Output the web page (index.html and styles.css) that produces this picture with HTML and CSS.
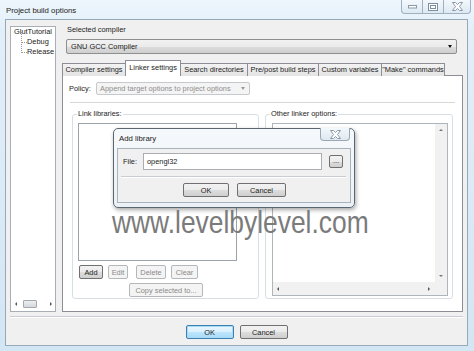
FILE: index.html
```html
<!DOCTYPE html>
<html>
<head>
<meta charset="utf-8">
<link rel="stylesheet" href="styles.css">
</head>
<body>
<div class="window">
  <div class="titlebar">
    <span class="title">Project build options</span>
    <div class="caps">
      <span class="cap cap-min"><svg width="9" height="4" viewBox="0 0 9 4"><rect x="0.5" y="0.5" width="8" height="2.5" fill="#fff" stroke="#8a9aa8"/></svg></span>
      <span class="cap cap-max"><svg width="10" height="8" viewBox="0 0 10 8"><rect x="0.5" y="0.5" width="9" height="7" fill="#fff" stroke="#7d8d9b"/><rect x="2.5" y="2.5" width="5" height="3" fill="none" stroke="#7d8d9b"/></svg></span>
      <span class="cap cap-close"><svg width="11" height="9" viewBox="0 0 11 9"><path d="M0.5 0.5h3l2 2 2-2h3l-3 4 3 4h-3l-2-2-2 2h-3l3-4z" fill="#fff" stroke="#8a98a6"/></svg></span>
    </div>
  </div>
  <div class="client">
    <div class="main">
      <div class="tree">
        <div class="tree-items">
          <div class="node root">GlutTutorial</div>
          <div class="node child first">Debug</div>
          <div class="node child">Release</div>
        </div>
        <div class="tree-scroll">
          <span class="arr arr-l"></span>
          <span class="thumb"></span>
          <span class="arr arr-r"></span>
        </div>
      </div>
      <div class="right">
        <div class="lbl">Selected compiler</div>
        <div class="combo"><span>GNU GCC Compiler</span><span class="dd"></span></div>
        <div class="tabs">
          <span class="tab t1">Compiler settings</span>
          <span class="tab t2 sel">Linker settings</span>
          <span class="tab t3">Search directories</span>
          <span class="tab t4">Pre/post build steps</span>
          <span class="tab t5">Custom variables</span>
          <span class="tab t6">"Make" commands</span>
        </div>
        <div class="panel">
          <div class="policy">
            <span class="policy-lbl">Policy:</span>
            <div class="pcombo"><span>Append target options to project options</span><span class="dd gray"></span></div>
          </div>
          <div class="sep"></div>
          <div class="groups">
            <fieldset class="group g1">
              <legend>Link libraries:</legend>
              <div class="listbox"></div>
              <div class="btnrow">
                <span class="btn b-add">Add</span>
                <span class="btn dis b-edit">Edit</span>
                <span class="btn dis b-del">Delete</span>
                <span class="btn dis b-clear">Clear</span>
              </div>
              <span class="btn dis b-copy">Copy selected to...</span>
            </fieldset>
            <fieldset class="group g2">
              <legend>Other linker options:</legend>
              <div class="textarea">
                <div class="ta-body"></div>
                <div class="vscroll"><span class="arr arr-u"></span><span class="arr arr-d"></span></div>
                <div class="hscroll"><span class="arr arr-l"></span><span class="arr arr-r"></span></div>
                <div class="corner"></div>
              </div>
            </fieldset>
          </div>
        </div>
      </div>
    </div>
    <div class="footer-sep"></div>
    <div class="footer">
      <span class="btn def fb">OK</span>
      <span class="btn fb">Cancel</span>
    </div>
  </div>

  <div class="dialog">
    <div class="dlg-title">Add library</div>
    <span class="dlg-close"><svg width="11" height="9" viewBox="0 0 11 9"><path d="M0.5 0.5h3l2 2 2-2h3l-3 4 3 4h-3l-2-2-2 2h-3l3-4z" fill="#fff" stroke="#8a98a6"/></svg></span>
    <div class="dlg-body">
      <div class="file-row">
        <span class="file-lbl">File:</span>
        <div class="input">opengl32</div>
        <span class="btn browse">...</span>
      </div>
      <div class="dlg-sep"></div>
      <div class="dlg-btns">
        <span class="btn d-ok">OK</span>
        <span class="btn d-cancel">Cancel</span>
      </div>
    </div>
  </div>

  <div class="watermark">www.levelbylevel.com</div>
</div>
</body>
</html>
```
FILE: styles.css
```css
* { box-sizing: border-box; }
html, body { margin: 0; padding: 0; }
body {
  width: 474px; height: 351px; overflow: hidden;
  font-family: "Liberation Sans", Arial, sans-serif;
  font-size: 7.4px; color: #222;
  background: #dceaf5;
}
.window {
  position: relative;
  width: 474px; height: 351px;
  background: linear-gradient(to bottom, #eef6fc 0px, #e2eff9 30px, #d3e6f4 351px);
  display: flex; flex-direction: column;
}
.titlebar {
  height: 19px; display: flex; align-items: flex-start;
}
.title { padding: 6px 0 0 6px; line-height: 9px; font-size: 7.8px; color: #1a1a1a; }
.caps { margin-left: auto; margin-right: 3px; display: flex; height: 14px; }
.cap {
  height: 14px; display: flex; align-items: center; justify-content: center;
  border: 1px solid #9fb1c1; border-top: none;
  background: linear-gradient(to bottom, #f3f8fc, #dde9f3);
}
.cap-min { width: 21px; border-radius: 0 0 0 4px; border-right: none; }
.cap-max { width: 21px; border-right: none; }
.cap-close { width: 28px; border-radius: 0 0 4px 0; }

.client {
  margin-left: 5px; width: 463px; height: 327px;
  border: 1px solid #97a8b8;
  background: #f0f0f0;
  display: flex; flex-direction: column;
}
.main { display: flex; padding: 6px 0 0 4px; gap: 6px; height: 293px; }
.tree {
  width: 46px; height: 286px; border: 1px solid #a8aeb5; background: #fff;
  display: flex; flex-direction: column;
}
.tree-items { flex: 1; }
.node { line-height: 10px; white-space: nowrap; position: relative; }
.root { padding-left: 3px; }
.child { padding-left: 16px; }
.child::before {
  content: ""; position: absolute; left: 10px; top: -5px; width: 5px; height: 10px;
  border-left: 1px dotted #999; border-bottom: 1px dotted #999;
}
.tree-scroll {
  height: 10px; margin: 0 0 2px 0; display: flex; align-items: center; padding: 0 3px 0 4px;
}
.tree-scroll .thumb {
  width: 14px; height: 8px; margin: 0 auto 0 6px; border: 1px solid #a4a9ae; border-radius: 1px;
  background: linear-gradient(#eceef0, #d6d9dc);
}
.arr { width: 0; height: 0; border: 2px solid transparent; display: inline-block; }
.arr-l { border-right: 2px solid #555; border-left: none; }
.arr-r { border-left: 2px solid #555; border-right: none; }
.arr-u { border-bottom: 2px solid #777; border-top: none; }
.arr-d { border-top: 2px solid #777; border-bottom: none; }

.right { width: 401px; display: flex; flex-direction: column; }
.lbl { line-height: 10px; margin-top: -1px; padding-left: 5px; }
.combo {
  margin: 4px 6px 0 4px; height: 15px;
  border: 1px solid #8e8f8f; border-radius: 2px;
  background: linear-gradient(to bottom, #f2f2f2 0%, #ebebeb 50%, #dddddd 51%, #cfcfcf 100%);
  display: flex; align-items: center; padding: 0 4px 0 4px;
}
.combo span:first-child { flex: 1; }
.dd { width: 0; height: 0; border-left: 2.5px solid transparent; border-right: 2.5px solid transparent; border-top: 3px solid #111; }
.dd.gray { border-top-color: #999; }

.tabs { display: flex; align-items: flex-end; height: 16px; margin-top: 6px; margin-bottom: -1px; position: relative; z-index: 1; }
.tab {
  height: 13px; line-height: 11px; text-align: center; white-space: nowrap;
  border: 1px solid #8c8e94; border-bottom: none; border-right: none;
  background: linear-gradient(to bottom, #f3f3f3, #e3e3e3);
}
.t6 { border-right: 1px solid #8c8e94; }
.tab.sel { height: 16px; background: #fff; line-height: 13px; border-right: 1px solid #8c8e94; }
.sel + .tab { border-left: none; }
.t1 { width: 63px; }
.t2 { width: 56px; }
.t3 { width: 66px; }
.t4 { width: 71px; }
.t5 { width: 63px; }
.t6 { width: 64px; }

.panel {
  height: 237px; border: 1px solid #8c8e94; background: #fff;
  display: flex; flex-direction: column;
}
.policy { display: flex; align-items: center; padding: 6px 0 0 6px; }
.policy-lbl { width: 27px; }
.pcombo {
  width: 154px; height: 13px; border: 1px solid #c5c8cc; border-radius: 2px;
  background: #f4f4f4; color: #8d8d8d; display: flex; align-items: center; padding: 0 4px 0 3px;
}
.pcombo span:first-child { flex: 1; }
.sep { margin: 7px 7px 0 7px; border-top: 1px solid #d8d8d8; }
.groups { display: flex; gap: 6px; margin: 7px 0 0 9px; }
.group {
  margin: 0; padding: 0; border: 1px solid #d5dfe5; border-radius: 3px;
  height: 189px; display: flex; flex-direction: column;
}
.group legend { padding: 0 1px; margin-left: 4px; line-height: 8px; }
.g1 { width: 187px; }
.g2 { width: 188px; }
.listbox { margin: 5px 0 0 5px; width: 159px; height: 138px; border: 1px solid #9da2a8; background: #fff; }
.btnrow { display: flex; margin: 4px 0 0 6px; }
.btn {
  display: inline-flex; align-items: center; justify-content: center; white-space: nowrap;
  height: 14px; border: 1px solid #707070; border-radius: 2px;
  background: linear-gradient(to bottom, #f2f2f2 0%, #ebebeb 50%, #dddddd 51%, #cfcfcf 100%);
}
.btn.dis { border-color: #b5b8bb; background: #f4f4f4; color: #8a8a8a; }
.b-add { width: 24px; }
.b-edit { width: 20px; margin-left: 5px; }
.b-del { width: 30px; margin-left: 8px; }
.b-clear { width: 27px; margin-left: 5px; }
.b-copy { width: 74px; margin: 4px 0 0 56px; }

.textarea {
  margin: 5px 0 0 6px; width: 176px; height: 173px; border: 1px solid #b0b5ba; background: #fff;
  display: grid; grid-template-columns: 1fr 12px; grid-template-rows: 1fr 13px;
}
.vscroll { background: #f1f1f1; display: flex; flex-direction: column; justify-content: space-between; align-items: center; padding: 5px 0 5px; }
.hscroll { background: #f1f1f1; display: flex; justify-content: space-between; align-items: center; padding: 0 5px 0 4px; }
.corner { background: #f1f1f1; }

.footer-sep { margin: 3px 4px 0 4px; border-top: 1px solid #c9cdd1; border-bottom: 1px solid #fff; }
.footer { display: flex; justify-content: center; gap: 6px; margin-top: 7px; }
.fb { width: 48px; }
.btn.def { border-color: #3c7fb1; box-shadow: inset 0 0 0 1px #a8dcf5; background: linear-gradient(to bottom, #eaf6fd 0%, #d9f0fc 50%, #bee6fd 51%, #a7d9f5 100%); }

.dialog {
  position: absolute; left: 113px; top: 128px; width: 242px; height: 80px;
  border: 1px solid #5c6670; border-radius: 5px;
  background: linear-gradient(to bottom, #f6f9fc, #eaf0f5);
  box-shadow: 1px 2px 4px rgba(0,0,0,0.35);
  display: flex; flex-direction: column;
}
.dlg-title { height: 19px; line-height: 19px; padding-left: 5px; font-size: 7.8px; }
.dlg-close {
  position: absolute; top: -1px; right: 4px; width: 30px; height: 13px;
  border: 1px solid #9aa8b5; border-top: none; border-radius: 0 0 4px 4px;
  background: linear-gradient(#f4f8fb, #dfe8f0);
  display: flex; align-items: center; justify-content: center;
}
.dlg-body {
  margin: 0 3px 4px 3px; flex: 1; border: 1px solid #a9b3bd; background: #f0f0f0;
  display: flex; flex-direction: column;
}
.file-row { display: flex; align-items: center; margin-top: 4px; padding-left: 5px; }
.file-lbl { width: 20px; }
.input { width: 179px; height: 17px; border: 1px solid #abadb3; background: #fff; padding-left: 3px; line-height: 15px; }
.browse { width: 14px; height: 13px; margin-left: 7px; padding-bottom: 2px; }
.dlg-sep { margin: 6px 4px 0 3px; border-top: 1px solid #c9cdd1; border-bottom: 1px solid #fff; }
.dlg-btns { display: flex; margin: 5px 0 0 65px; }
.d-ok { width: 46px; }
.d-cancel { width: 49px; margin-left: 8px; }

.watermark {
  position: absolute; left: 112px; top: 211px;
  font-family: "Liberation Sans", Arial, sans-serif;
  font-size: 26.4px; line-height: 26px; color: #7b7b7b; white-space: nowrap;
  transform: scaleY(1.18); transform-origin: 0 22px;
}
```
